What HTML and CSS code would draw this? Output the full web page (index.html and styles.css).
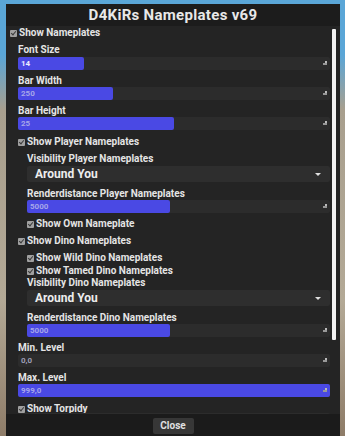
FILE: index.html
```html
<!DOCTYPE html>
<html>
<head>
<meta charset="utf-8">
<link rel="stylesheet" href="styles.css">
</head>
<body>
<div class="panel">
  <div class="title">D4KiRs Nameplates v69</div>
  <div class="scroll">
    <div class="content">
      <div class="cb l0 r-first"><span class="box"></span>Show Nameplates</div>

      <div class="label l1 gap5">Font Size</div>
      <div class="slider l1 gap1"><div class="fill" style="width:21%"></div><span class="val bright">14</span><span class="grip"></span></div>

      <div class="label l1 gap5">Bar Width</div>
      <div class="slider l1"><div class="fill" style="width:30.4%"></div><span class="val">250</span><span class="grip"></span></div>

      <div class="label l1 gap5">Bar Height</div>
      <div class="slider l1"><div class="fill" style="width:50%"></div><span class="val">25</span><span class="grip"></span></div>

      <div class="cb l1 gap6"><span class="box"></span>Show Player Nameplates</div>

      <div class="label l2 gap5">Visibility Player Nameplates</div>
      <div class="dropdown l2 gap1"><span>Around You</span><span class="arrow"></span></div>

      <div class="label l2 gap6">Renderdistance Player Nameplates</div>
      <div class="slider l2"><div class="fill" style="width:47.2%"></div><span class="val">5000</span><span class="grip"></span></div>

      <div class="cb l2 gap5"><span class="box"></span>Show Own Nameplate</div>

      <div class="cb l1 gap5"><span class="box"></span>Show Dino Nameplates</div>

      <div class="cb l2 gap5"><span class="box"></span>Show Wild Dino Nameplates</div>
      <div class="cb l2 gap1"><span class="box"></span>Show Tamed Dino Nameplates</div>
      <div class="label l2">Visibility Dino Nameplates</div>
      <div class="dropdown l2 gap1"><span>Around You</span><span class="arrow"></span></div>

      <div class="label l2 gap6">Renderdistance Dino Nameplates</div>
      <div class="slider l2"><div class="fill" style="width:47.2%"></div><span class="val">5000</span><span class="grip"></span></div>

      <div class="label l1 gap5">Min. Level</div>
      <div class="slider l1"><span class="val">0,0</span><span class="grip"></span></div>

      <div class="label l1 gap5">Max. Level</div>
      <div class="slider l1"><div class="fill" style="width:100%"></div><span class="val">999,0</span><span class="grip"></span></div>

      <div class="cb l1 gap6"><span class="box"></span>Show Torpidy</div>
      <div class="slider l1 gap-1"></div>
    </div>
    <div class="scrollbar"><div class="thumb"></div></div>
  </div>
  <div class="footer"><button class="close">Close</button></div>
</div>
</body>
</html>
```
FILE: styles.css
```css
* { box-sizing: border-box; }
html, body { margin: 0; padding: 0; }
body {
  width: 345px;
  height: 436px;
  overflow: hidden;
  font-family: Roboto, "Liberation Sans", sans-serif;
  background: linear-gradient(180deg, #5aa6d7 0px, #5aa6d7 55px, #a89f8e 110px, #b3a996 300px, #8e7c68 436px);
  padding: 4px 5px 0 6px;
}
.panel {
  width: 334px;
  height: 432px;
  background: #242424;
  display: flex;
  flex-direction: column;
}
.title {
  height: 22px;
  flex: 0 0 22px;
  background: #1c1c1c;
  color: #e8e8e8;
  font-weight: 700;
  font-size: 15px;
  line-height: 22px;
  text-align: center;
  letter-spacing: 0.3px;
}
.scroll {
  flex: 1 1 auto;
  display: flex;
  overflow: hidden;
}
.content {
  flex: 1 1 auto;
  overflow: hidden;
  padding-right: 2px;
  color: #e4e4e4;
  font-weight: 700;
  font-size: 10px;
}
.scrollbar {
  flex: 0 0 8px;
  padding-top: 3px;
}
.thumb {
  width: 4px;
  height: 311px;
  background: #f2f2f2;
  border-radius: 1px;
}
.l0 { margin-left: 4px; }
.l1 { margin-left: 12px; }
.l2 { margin-left: 21px; }
.r-first { margin-top: 1px; }
.gap1 { margin-top: 1px; }
.gap5 { margin-top: 5px; }
.gap6 { margin-top: 6px; }
.gap-1 { margin-top: -2px; }
.label, .cb {
  height: 12px;
  line-height: 12px;
  white-space: nowrap;
}
.cb { display: flex; align-items: center; }
.box {
  width: 7px;
  height: 7px;
  margin-right: 2px;
  background: #a0a0a0;
  border-radius: 1px;
  position: relative;
  flex: 0 0 7px;
}
.box::after {
  content: "";
  position: absolute;
  left: 2px;
  top: 0px;
  width: 2px;
  height: 4px;
  border: solid #3a3a3a;
  border-width: 0 1.2px 1.2px 0;
  transform: rotate(40deg);
}
.slider {
  height: 13px;
  background: #2c2c2c;
  border-radius: 2px;
  position: relative;
  display: flex;
  align-items: center;
}
.fill {
  position: absolute;
  left: 0; top: 0; bottom: 0;
  background: #4a49e4;
  border-radius: 2px;
}
.val {
  position: relative;
  padding-left: 3px;
  font-size: 8px;
  font-weight: 700;
  color: rgba(205, 205, 235, 0.72);
}
.val.bright { color: #ececff; }
.grip {
  position: absolute;
  right: 3px;
  top: 4px;
  width: 4px;
  height: 4px;
  background:
    radial-gradient(circle at 3px 1px, #bbb 0.8px, transparent 1px),
    radial-gradient(circle at 1px 3px, #999 0.8px, transparent 1px),
    radial-gradient(circle at 3px 3px, #999 0.8px, transparent 1px);
}
.dropdown {
  height: 16px;
  background: #2e2e2e;
  border-radius: 2px;
  display: flex;
  align-items: center;
  justify-content: space-between;
  padding: 0 9px 0 8px;
  font-size: 12px;
  font-weight: 700;
  color: #ededed;
}
.arrow {
  width: 0; height: 0;
  border-left: 3px solid transparent;
  border-right: 3px solid transparent;
  border-top: 3px solid #e0e0e0;
}
.footer {
  flex: 0 0 22px;
  background: #1b1b1b;
  display: flex;
  justify-content: center;
  padding-top: 4px;
}
.close {
  width: 41px;
  height: 16px;
  padding: 0;
  border: none;
  border-radius: 2px;
  background: #373737;
  color: #e0e0e0;
  font-family: Roboto, "Liberation Sans", sans-serif;
  font-weight: 700;
  font-size: 10px;
  line-height: 16px;
}
```
